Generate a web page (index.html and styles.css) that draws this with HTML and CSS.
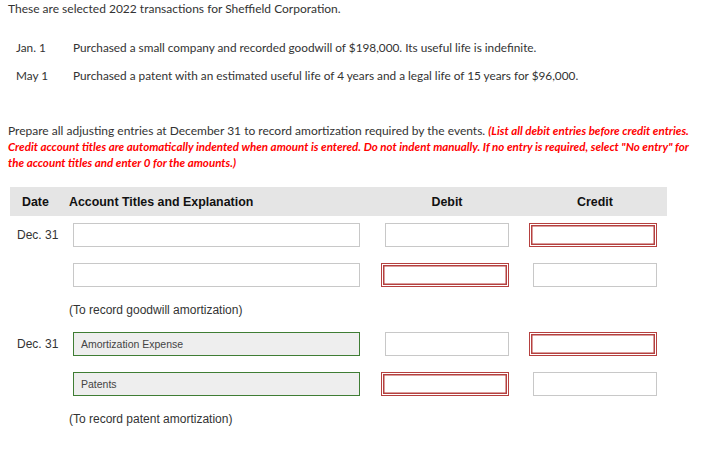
FILE: index.html
```html
<!DOCTYPE html>
<html>
<head>
    <link rel="stylesheet" href="styles.css">
</head>
<body>
    <div class="page">
        <p class="intro">These are selected 2022 transactions for Sheffield Corporation.</p>

        <div class="events">
            <div class="event">
                <span class="event-date">Jan. 1</span>
                <span>Purchased a small company and recorded goodwill of $198,000. Its useful life is indefinite.</span>
            </div>
            <div class="event">
                <span class="event-date">May 1</span>
                <span>Purchased a patent with an estimated useful life of 4 years and a legal life of 15 years for $96,000.</span>
            </div>
        </div>

        <p class="task">Prepare all adjusting entries at December 31 to record amortization required by the events. <em class="note">(List all debit entries before credit entries. Credit account titles are automatically indented when amount is entered. Do not indent manually. If no entry is required, select "No entry" for the account titles and enter 0 for the amounts.)</em></p>

        <div class="journal">
            <div class="row head">
                <div class="cell date">Date</div>
                <div class="cell account">Account Titles and Explanation</div>
                <div class="cell amount">Debit</div>
                <div class="cell amount">Credit</div>
            </div>

            <div class="row entry">
                <div class="cell date">Dec. 31</div>
                <div class="cell account"><div class="field"></div></div>
                <div class="cell amount"><div class="field"></div></div>
                <div class="cell amount"><div class="field wrong"></div></div>
            </div>
            <div class="row entry">
                <div class="cell date"></div>
                <div class="cell account"><div class="field"></div></div>
                <div class="cell amount"><div class="field wrong"></div></div>
                <div class="cell amount"><div class="field"></div></div>
            </div>
            <div class="row memo">
                <div class="cell date"></div>
                <div class="cell account">(To record goodwill amortization)</div>
            </div>

            <div class="row entry">
                <div class="cell date">Dec. 31</div>
                <div class="cell account"><div class="field right">Amortization Expense</div></div>
                <div class="cell amount"><div class="field"></div></div>
                <div class="cell amount"><div class="field wrong"></div></div>
            </div>
            <div class="row entry">
                <div class="cell date"></div>
                <div class="cell account"><div class="field right">Patents</div></div>
                <div class="cell amount"><div class="field wrong"></div></div>
                <div class="cell amount"><div class="field"></div></div>
            </div>
            <div class="row memo">
                <div class="cell date"></div>
                <div class="cell account">(To record patent amortization)</div>
            </div>
        </div>
    </div>
</body>
</html>
```

FILE: styles.css
```css
body {
    margin: 0;
    padding: 0;
    background: #fff;
    color: #333;
    font-family: Lato, "Open Sans", sans-serif;
    font-size: 12px;
}

.page {
    padding: 1px 8px 0 8px;
}

.intro {
    margin: 0;
    line-height: 16px;
}

.events {
    margin-top: 23px;
    display: flex;
    flex-direction: column;
    gap: 12px;
    font-size: 11.8px;
}

.event {
    display: flex;
    line-height: 16px;
}

.event-date {
    width: 57px;
    padding-left: 8px;
    flex-shrink: 0;
}

.task {
    margin: 39px 0 0 0;
    line-height: 16px;
}

.note {
    color: #f00;
    font-weight: bold;
    font-size: 11.55px;
    line-height: 16px;
}

.journal {
    margin-top: 16px;
    margin-left: 2px;
    width: 657px;
    font-family: "Liberation Sans", Arial, sans-serif;
    font-size: 12px;
}

.row {
    display: grid;
    grid-template-columns: 59px 316px 148px 134px;
    align-items: center;
}

.head {
    height: 29px;
    background: #e5e5e5;
    color: #111;
    font-weight: bold;
    font-size: 12.4px;
}

.head .date {
    padding-left: 12px;
}

.head .amount {
    width: 124px;
    text-align: center;
}

.entry {
    height: 24px;
    margin-top: 16px;
}

.head + .entry {
    margin-top: 7px;
}

.date {
    padding-left: 7px;
}

.entry .account .field {
    margin-left: 4px;
    width: 287px;
}

.field {
    box-sizing: border-box;
    width: 124px;
    height: 24px;
    border: 1px solid #c8c8c8;
    background: #fff;
}

.field.wrong {
    width: 128px;
    margin-left: -4px;
    border: 1px solid #b5403f;
    box-shadow: inset 0 0 0 1px #fff, inset 0 0 0 2.5px #b5403f;
}

.field.right {
    border-color: #3f7d34;
    background: #eeeeee;
    color: #444;
    font-size: 10.5px;
    line-height: 22px;
    padding-left: 7px;
}

.memo {
    height: 24px;
    margin-top: 11px;
}

.memo + .entry {
    margin-top: 10px;
}
```
